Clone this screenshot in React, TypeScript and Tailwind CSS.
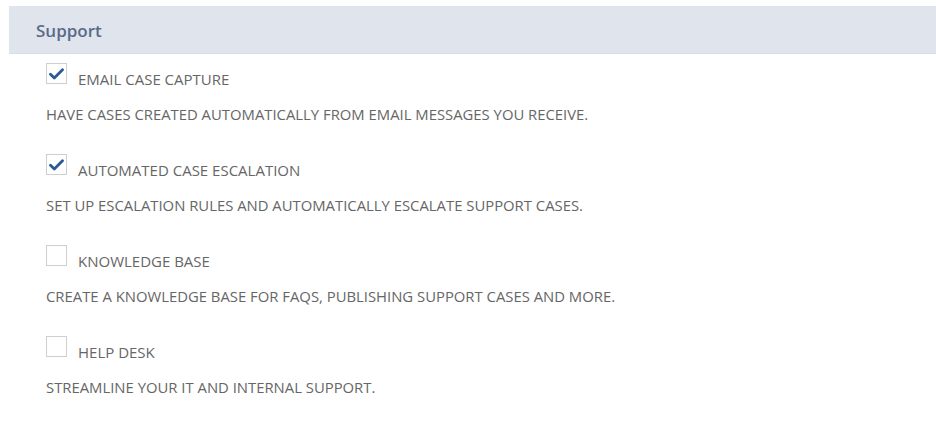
import React from 'react';

const items = [
  { label: 'EMAIL CASE CAPTURE', desc: 'HAVE CASES CREATED AUTOMATICALLY FROM EMAIL MESSAGES YOU RECEIVE.', checked: true },
  { label: 'AUTOMATED CASE ESCALATION', desc: 'SET UP ESCALATION RULES AND AUTOMATICALLY ESCALATE SUPPORT CASES.', checked: true },
  { label: 'KNOWLEDGE BASE', desc: 'CREATE A KNOWLEDGE BASE FOR FAQS, PUBLISHING SUPPORT CASES AND MORE.', checked: false },
  { label: 'HELP DESK', desc: 'STREAMLINE YOUR IT AND INTERNAL SUPPORT.', checked: false },
];

function Checkbox({ checked }: { checked: boolean }) {
  return (
    <span className="w-[21px] h-[21px] shrink-0 border border-[#cfcfcf] bg-white flex items-center justify-center">
      {checked && (
        <svg width="15" height="12" viewBox="0 0 15 12">
          <path d="M1.5 6.2 L5.3 10 L13.5 1.8" fill="none" stroke="#2c5a92" strokeWidth="2.8" strokeLinecap="round" strokeLinejoin="round" />
        </svg>
      )}
    </span>
  );
}

export default function App() {
  return (
    <div className="w-[936px] h-[424px] bg-white pt-[6px] pl-[9px]" style={{ fontFamily: '"Open Sans", sans-serif' }}>
      {/* Section header */}
      <div className="h-[48px] bg-[#dfe4ed] border-b border-[#d8dde6] flex items-center pl-[27px]">
        <h2 className="text-[17px] text-[#5a6a8a] font-semibold mt-[2px]">Support</h2>
      </div>

      {/* Options */}
      <div className="pl-[37px] pt-[9px] flex flex-col gap-[30px]">
        {items.map((it) => (
          <div key={it.label} className="flex flex-col">
            <label className="flex items-start gap-[11px]">
              <Checkbox checked={it.checked} />
              <span className="text-[15px] leading-[20px] text-[#666] pt-[6px]">{it.label}</span>
            </label>
            <p className="text-[14.85px] leading-[20px] text-[#666] mt-[15px]">{it.desc}</p>
          </div>
        ))}
      </div>
    </div>
  );
}
